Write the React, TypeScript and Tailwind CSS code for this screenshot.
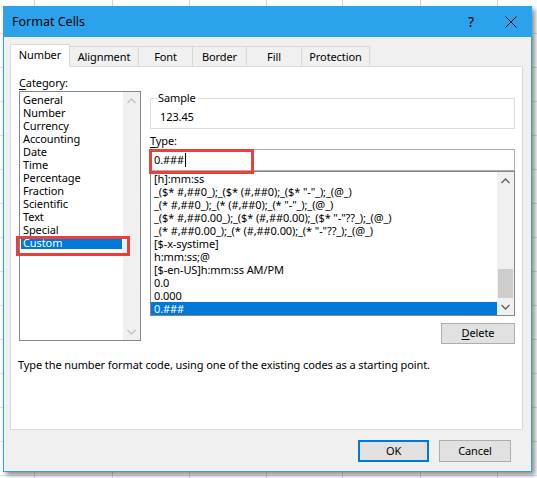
import React from 'react';

const categories = [
  'General',
  'Number',
  'Currency',
  'Accounting',
  'Date',
  'Time',
  'Percentage',
  'Fraction',
  'Scientific',
  'Text',
  'Special',
  'Custom',
];

const formats = [
  '[h]:mm:ss',
  '_($* #,##0_);_($* (#,##0);_($* "-"_);_(@_)',
  '_(* #,##0_);_(* (#,##0);_(* "-"_);_(@_)',
  '_($* #,##0.00_);_($* (#,##0.00);_($* "-"??_);_(@_)',
  '_(* #,##0.00_);_(* (#,##0.00);_(* "-"??_);_(@_)',
  '[$-x-systime]',
  'h:mm:ss;@',
  '[$-en-US]h:mm:ss AM/PM',
  '0.0',
  '0.000',
  '0.###',
];

const tabs = [
  { label: 'Number', width: 'w-[60px]' },
  { label: 'Alignment', width: 'w-[69px]' },
  { label: 'Font', width: 'w-[54px]' },
  { label: 'Border', width: 'w-[54px]' },
  { label: 'Fill', width: 'w-[55px]' },
  { label: 'Protection', width: 'w-[68px]' },
];

const colWidths = ['w-[35px]', 'w-[78px]', 'w-[77px]', 'w-[77px]', 'w-[76px]', 'w-[78px]', 'w-[77px]', 'w-[77px]'];

function Chevron({ up, color }: { up?: boolean; color: string }) {
  return (
    <svg width="9" height="6" viewBox="0 0 9 6" className={color}>
      <path
        d={up ? 'M0.5 5L4.5 1L8.5 5' : 'M0.5 1L4.5 5L8.5 1'}
        fill="none"
        stroke="currentColor"
        strokeWidth="1.3"
      />
    </svg>
  );
}

function Scrollbar({ disabled }: { disabled?: boolean }) {
  const arrowColor = disabled ? 'text-[#c2c2c2]' : 'text-[#606060]';
  return (
    <div className="flex w-[17px] shrink-0 flex-col bg-[#f0f0f0]">
      <div className="flex h-[17px] items-center justify-center">
        <Chevron up color={arrowColor} />
      </div>
      <div className="flex flex-1 flex-col justify-end">
        {!disabled && <div className="mx-[1px] h-[29px] bg-[#cdcdcd]" />}
      </div>
      <div className="flex h-[17px] items-center justify-center">
        <Chevron color={arrowColor} />
      </div>
    </div>
  );
}

export default function App() {
  return (
    <div className="relative h-[478px] w-[537px] overflow-hidden bg-white font-['Noto_Sans',sans-serif] text-[11px] tracking-[-0.1px] text-black">
      {/* spreadsheet behind the dialog */}
      <div className="flex h-full">
        {colWidths.map((w, i) => (
          <div key={i} className={`${w} h-full shrink-0 border-r border-[#d4d4d4]`}>
            {Array.from({ length: 14 }).map((_, r) => (
              <div key={r} className="h-[34px] border-b border-[#e1e1e1]" />
            ))}
          </div>
        ))}
      </div>

      {/* dialog window */}
      <div className="absolute left-[3px] top-[6px] flex h-[466px] w-[529px] flex-col border border-[#2ba2ec] bg-[#f0f0f0] shadow-[3px_3px_5px_rgba(0,0,0,0.45)]">
        <div className="flex h-[30px] shrink-0 items-center bg-[#2ba2ec] pl-[8px] pr-[14px]">
          <span className="text-[12.5px] leading-none tracking-normal">Format Cells</span>
          <span className="ml-auto mr-[31px] text-[14px] leading-none">?</span>
          <svg width="12" height="12" viewBox="0 0 12 12">
            <path d="M0.5 0.5L11.5 11.5M11.5 0.5L0.5 11.5" stroke="#000" strokeWidth="1" />
          </svg>
        </div>

        <div className="flex flex-1 flex-col pl-[6px] pr-[8px] pt-[7px]">
          {/* tabs */}
          <div className="flex h-[22px] items-end">
            {tabs.map((t, i) =>
              i === 0 ? (
                <div
                  key={t.label}
                  className={`${t.width} relative z-10 -mb-[1px] flex h-[23px] items-center justify-center border border-b-0 border-[#d9d9d9] bg-white pb-[1px]`}
                >
                  {t.label}
                </div>
              ) : (
                <div
                  key={t.label}
                  className={`${t.width} flex h-[20px] items-center justify-center border-r border-t border-[#d9d9d9] bg-[#f0f0f0] pt-[1px]`}
                >
                  {t.label}
                </div>
              ),
            )}
          </div>

          {/* tab panel */}
          <div className="flex h-[364px] flex-col border border-[#d9d9d9] bg-white">
            <div className="flex">
              <div className="ml-[8px] flex w-[122px] flex-col pt-[8px]">
                <div className="h-[16px] leading-[16px]">
                  <span className="underline underline-offset-2">C</span>ategory:
                </div>
                <div className="flex h-[250px] border border-[#828790] bg-white">
                  <div className="flex-1 p-[1px]">
                    {categories.map((c) => (
                      <div
                        key={c}
                        className={`h-[13px] pl-[2px] leading-[13px] ${c === 'Custom' ? 'bg-[#0078d7] text-white' : ''}`}
                      >
                        {c}
                      </div>
                    ))}
                  </div>
                  <Scrollbar disabled />
                </div>
              </div>

              <div className="ml-[9px] flex w-[365px] flex-col pt-[23px]">
                <fieldset className="border border-[#dcdcdc] px-[9px] pb-[3px] pt-[3px]">
                  <legend className="-ml-[3px] px-[1px] leading-[16px]">Sample</legend>
                  <div className="leading-[16px]">123.45</div>
                </fieldset>
                <div className="mt-[4px] h-[16px] leading-[16px]">
                  <span className="underline underline-offset-2">T</span>ype:
                </div>
                <div className="flex h-[22px] items-center border border-[#adadad] bg-white pl-[3px]">
                  <span>0.###</span>
                  <span className="ml-[1px] h-[14px] w-[1px] bg-black" />
                </div>
                <div className="flex h-[145px] border border-[#828790] bg-white">
                  <div className="flex-1 whitespace-nowrap">
                    {formats.map((f) => (
                      <div
                        key={f}
                        className={`h-[13px] pl-[3px] leading-[13px] ${f === '0.###' ? 'bg-[#0078d7] text-white' : ''}`}
                      >
                        {f}
                      </div>
                    ))}
                  </div>
                  <Scrollbar />
                </div>
                <div className="mt-[7px] flex h-[21px] w-[74px] items-center justify-center self-end border border-[#adadad] bg-[#e1e1e1]">
                  <span className="underline underline-offset-2">D</span>elete
                </div>
              </div>
            </div>
            <div className="ml-[7px] mt-[13px] leading-[16px]">
              Type the number format code, using one of the existing codes as a starting point.
            </div>
          </div>

          {/* dialog buttons */}
          <div className="mt-[10px] flex justify-end gap-[10px] pr-[12px]">
            <div className="flex h-[22px] w-[71px] items-center justify-center border-2 border-[#0078d7] bg-[#e1e1e1]">
              OK
            </div>
            <div className="flex h-[22px] w-[72px] items-center justify-center border border-[#adadad] bg-[#e1e1e1]">
              Cancel
            </div>
          </div>
        </div>

        {/* red highlight annotations */}
        <div className="absolute left-[12px] top-[229px] h-[20px] w-[114px] border-[3px] border-[#e8403a]" />
        <div className="absolute left-[145px] top-[142px] h-[25px] w-[105px] border-[3px] border-[#e8403a]" />
      </div>
    </div>
  );
}
